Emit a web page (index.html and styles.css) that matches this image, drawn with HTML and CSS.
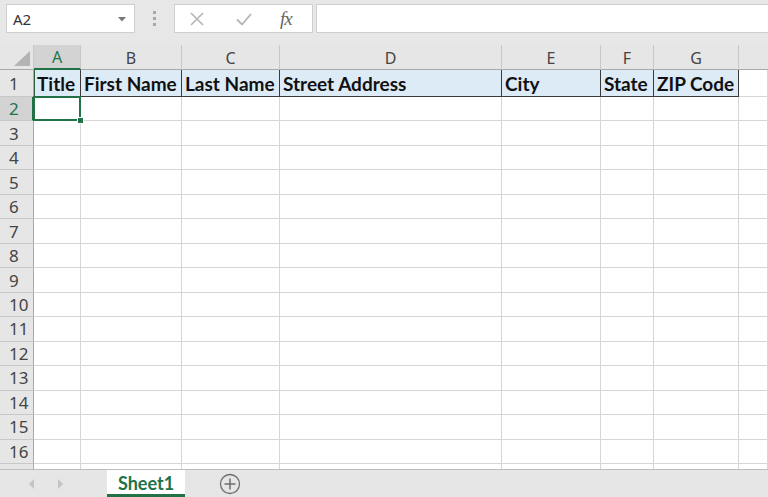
FILE: index.html
```html
<!DOCTYPE html>
<html>
<head>
<meta charset="utf-8">
<link rel="stylesheet" href="styles.css">
</head>
<body>
<div class="app">
  <div class="toolbar">
    <div class="namebox">
      <span class="nb-text">A2</span>
      <svg class="nb-arrow" width="8" height="5" viewBox="0 0 8 5"><path d="M0 0 L8 0 L4 4.5 Z" fill="#777"/></svg>
    </div>
    <div class="dots"><i></i><i></i><i></i></div>
    <div class="fbuttons">
      <svg class="ico" width="16" height="16" viewBox="0 0 16 16"><path d="M2 2 L14 14 M14 2 L2 14" stroke="#b4b4b4" stroke-width="1.6" fill="none"/></svg>
      <svg class="ico" width="18" height="16" viewBox="0 0 18 16"><path d="M2 8.5 L7 13.5 L16 3" stroke="#b4b4b4" stroke-width="1.8" fill="none"/></svg>
      <span class="fx">fx</span>
    </div>
    <div class="formula"></div>
  </div>

  <div class="sheet">
    <div class="grid">
      <div class="corner"><svg width="16" height="15" viewBox="0 0 16 15"><path d="M16 0 L16 15 L0 15 Z" fill="#b4b4b4"/></svg></div>
      <div class="ch sel">A</div>
      <div class="ch">B</div>
      <div class="ch">C</div>
      <div class="ch">D</div>
      <div class="ch">E</div>
      <div class="ch">F</div>
      <div class="ch">G</div>
      <div class="ch last"></div>

      <div class="rh r1">1</div>
      <div class="c h1 first">Title</div>
      <div class="c h1">First Name</div>
      <div class="c h1">Last Name</div>
      <div class="c h1">Street Address</div>
      <div class="c h1">City</div>
      <div class="c h1">State</div>
      <div class="c h1">ZIP Code</div>
      <div class="c r1c"></div>

      <div class="rh sel">2</div><div class="c active"><span class="handle"></span></div><div class="c"></div><div class="c"></div><div class="c"></div><div class="c"></div><div class="c"></div><div class="c"></div><div class="c"></div>
      <div class="rh">3</div><div class="c"></div><div class="c"></div><div class="c"></div><div class="c"></div><div class="c"></div><div class="c"></div><div class="c"></div><div class="c"></div>
      <div class="rh">4</div><div class="c"></div><div class="c"></div><div class="c"></div><div class="c"></div><div class="c"></div><div class="c"></div><div class="c"></div><div class="c"></div>
      <div class="rh">5</div><div class="c"></div><div class="c"></div><div class="c"></div><div class="c"></div><div class="c"></div><div class="c"></div><div class="c"></div><div class="c"></div>
      <div class="rh">6</div><div class="c"></div><div class="c"></div><div class="c"></div><div class="c"></div><div class="c"></div><div class="c"></div><div class="c"></div><div class="c"></div>
      <div class="rh">7</div><div class="c"></div><div class="c"></div><div class="c"></div><div class="c"></div><div class="c"></div><div class="c"></div><div class="c"></div><div class="c"></div>
      <div class="rh">8</div><div class="c"></div><div class="c"></div><div class="c"></div><div class="c"></div><div class="c"></div><div class="c"></div><div class="c"></div><div class="c"></div>
      <div class="rh">9</div><div class="c"></div><div class="c"></div><div class="c"></div><div class="c"></div><div class="c"></div><div class="c"></div><div class="c"></div><div class="c"></div>
      <div class="rh">10</div><div class="c"></div><div class="c"></div><div class="c"></div><div class="c"></div><div class="c"></div><div class="c"></div><div class="c"></div><div class="c"></div>
      <div class="rh">11</div><div class="c"></div><div class="c"></div><div class="c"></div><div class="c"></div><div class="c"></div><div class="c"></div><div class="c"></div><div class="c"></div>
      <div class="rh">12</div><div class="c"></div><div class="c"></div><div class="c"></div><div class="c"></div><div class="c"></div><div class="c"></div><div class="c"></div><div class="c"></div>
      <div class="rh">13</div><div class="c"></div><div class="c"></div><div class="c"></div><div class="c"></div><div class="c"></div><div class="c"></div><div class="c"></div><div class="c"></div>
      <div class="rh">14</div><div class="c"></div><div class="c"></div><div class="c"></div><div class="c"></div><div class="c"></div><div class="c"></div><div class="c"></div><div class="c"></div>
      <div class="rh">15</div><div class="c"></div><div class="c"></div><div class="c"></div><div class="c"></div><div class="c"></div><div class="c"></div><div class="c"></div><div class="c"></div>
      <div class="rh">16</div><div class="c"></div><div class="c"></div><div class="c"></div><div class="c"></div><div class="c"></div><div class="c"></div><div class="c"></div><div class="c"></div>
      <div class="rh"></div><div class="c"></div><div class="c"></div><div class="c"></div><div class="c"></div><div class="c"></div><div class="c"></div><div class="c"></div><div class="c"></div>
    </div>
  </div>

  <div class="tabbar">
    <div class="nav">
      <svg width="6" height="10" viewBox="0 0 6 10"><path d="M5 0 L0 5 L5 10 Z" fill="#c4c4c4"/></svg>
      <svg width="6" height="10" viewBox="0 0 6 10"><path d="M1 0 L6 5 L1 10 Z" fill="#c4c4c4"/></svg>
    </div>
    <div class="tab">Sheet1</div>
    <div class="add">
      <svg width="22" height="22" viewBox="0 0 22 22"><circle cx="11" cy="11" r="9.5" stroke="#6e6e6e" stroke-width="1.3" fill="none"/><path d="M11 5.5 V16.5 M5.5 11 H16.5" stroke="#6e6e6e" stroke-width="1.5"/></svg>
    </div>
  </div>
</div>
</body>
</html>
```

FILE: styles.css
```css
* { box-sizing: border-box; }
html, body { margin: 0; padding: 0; }
body { width: 768px; height: 497px; overflow: hidden; background: #e6e6e6; font-family: "Noto Sans", "Open Sans", sans-serif; }

.app { width: 768px; height: 497px; display: flex; flex-direction: column; }

.toolbar { height: 45px; flex: none; display: flex; align-items: flex-start; padding-top: 4px; padding-left: 6px; background: #e7e7e7; }
.namebox { width: 129px; height: 29px; background: #fff; border: 1px solid #cfcfcf; display: flex; align-items: center; justify-content: space-between; padding: 0 8px 0 6px; }
.nb-text { font-size: 15px; color: #333; }
.nb-arrow { margin-top: 1px; }
.dots { width: 39px; height: 29px; display: flex; flex-direction: column; align-items: center; justify-content: center; gap: 3px; }
.dots i { display: block; width: 3px; height: 3px; background: #a8a8a8; }
.fbuttons { width: 139px; height: 29px; background: #fff; border: 1px solid #cfcfcf; display: flex; align-items: center; padding-left: 14px; gap: 0; }
.fbuttons .ico:first-child { margin-right: 30px; }
.fbuttons .ico:nth-child(2) { margin-right: 27px; }
.fx { font-family: "Liberation Serif", serif; font-style: italic; font-size: 19px; color: #666; letter-spacing: -1px; }
.formula { flex: 1; height: 29px; margin-left: 3px; background: #fff; border: 1px solid #cfcfcf; border-right: none; }

.sheet { height: 425px; flex: none; overflow: hidden; background: #fff; border-bottom: 1px solid #bdbdbd; }
.grid { display: grid; grid-template-columns: 34px 47px 101px 98px 222px 99px 53px 85px 29px; grid-template-rows: 25px 27px repeat(15, 24.47px) 24px; }

.corner { background: #e6e6e6; border-right: 1px solid #c8c8c8; border-bottom: 1px solid #a9a9a9; display: flex; align-items: flex-end; justify-content: flex-end; padding: 0 3px 3px 0; }
.ch { background: #e6e6e6; border-right: 1px solid #c8c8c8; border-bottom: 1px solid #a9a9a9; font-size: 16px; color: #444; display: flex; align-items: center; justify-content: center; padding-top: 1px; }
.ch.sel { background: #d3d3d3; color: #217346; border-bottom: 2px solid #217346; }
.ch.last { border-right: none; }

.rh { background: #e6e6e6; border-right: 1px solid #a9a9a9; border-bottom: 1px solid #c8c8c8; font-size: 17px; color: #444; display: flex; align-items: center; padding-left: 9px; }
.rh.sel { background: #d3d3d3; color: #217346; border-right: 2px solid #217346; }

.c { border-right: 1px solid #d6d6d6; border-bottom: 1px solid #d6d6d6; position: relative; }
.h1 { background: #ddebf7; border-right: 1px solid #3a3a3a; border-bottom: 1px solid #3a3a3a; font-family: "Lato", "Open Sans", sans-serif; font-weight: bold; font-size: 19px; color: #111; display: flex; align-items: center; padding-left: 3px; padding-top: 1px; white-space: nowrap; overflow: hidden; }
.h1.first { border-left: 1px solid #2f5d3f; padding-left: 2px; }
.r1c { border-bottom: 1px solid #d6d6d6; }

.active { border: 2px solid #217346; margin-left: -1px; margin-top: -1px; z-index: 2; }
.handle { position: absolute; right: -5px; bottom: -5px; width: 7px; height: 7px; background: #217346; border: 1px solid #fff; z-index: 3; }

.tabbar { flex: 1; display: flex; align-items: stretch; background: #e6e6e6; }
.nav { width: 107px; display: flex; align-items: center; gap: 22px; padding-left: 29px; }
.tab { width: 78px; background: #fff; color: #217346; font-family: "Lato", "Open Sans", sans-serif; font-weight: bold; font-size: 18px; display: flex; align-items: center; justify-content: center; border-bottom: 3px solid #217346; padding-top: 2px; }
.add { display: flex; align-items: center; padding-left: 34px; }
```
